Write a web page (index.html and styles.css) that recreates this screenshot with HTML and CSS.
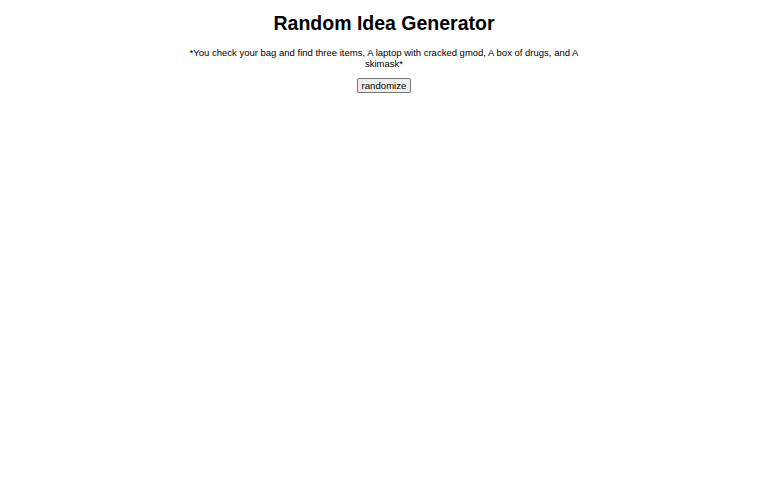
FILE: index.html
```html
<!DOCTYPE html>
<html>
<head>
<meta charset="utf-8">
<title>Random Idea Generator</title>
<link rel="stylesheet" href="styles.css">
</head>
<body>
<main class="app">
  <h1 class="title">Random Idea Generator</h1>
  <p class="idea">*You check your bag and find three items, A laptop with cracked gmod, A box of drugs, and A skimask*</p>
  <button class="randomize" type="button">randomize</button>
</main>
</body>
</html>
```

FILE: styles.css
```css
body {
  margin: 8px;
  background: #fff;
  color: #000;
  font-family: "Liberation Sans", Arial, sans-serif;
}

.app {
  display: flex;
  flex-direction: column;
  align-items: center;
  text-align: center;
}

.title {
  font-size: 19.5px;
  font-weight: bold;
  margin: 0;
  line-height: 30px;
}

.idea {
  font-size: 9.5px;
  line-height: 11px;
  max-width: 396px;
  margin: 9px 0 9px;
}

.randomize {
  font-family: "Liberation Sans", Arial, sans-serif;
  font-size: 9.6px;
  padding: 1px 4px;
  background: #efefef;
  border: 1px solid #767676;
  border-radius: 2px;
  color: #000;
}
```
